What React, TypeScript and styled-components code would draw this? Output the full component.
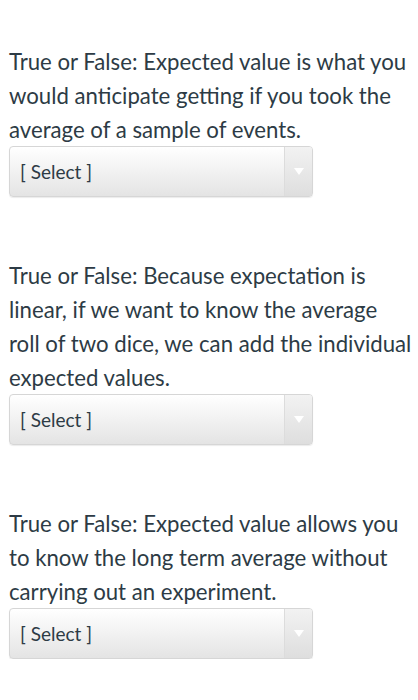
import React from "react";
import styled, { createGlobalStyle } from "styled-components";

const Global = createGlobalStyle`
  html, body { margin: 0; padding: 0; background: #ffffff; }
  body { font-family: Lato, "Open Sans", sans-serif; }
`;

const Page = styled.div`
  display: flex;
  flex-direction: column;
  gap: 62px;
  padding: 45px 0 0 9px;
`;

const Question = styled.div`
  display: flex;
  flex-direction: column;
`;

const Prompt = styled.p`
  margin: 0;
  width: 403px;
  font-size: 22.2px;
  line-height: 34px;
  color: #2d3b45;
`;

const SelectBox = styled.div`
  margin-top: -1px;
  width: 304px;
  height: 51px;
  box-sizing: border-box;
  display: flex;
  border: 1px solid #d6d6d6;
  border-radius: 4px;
  background: linear-gradient(#ffffff, #e4e4e4);
  box-shadow: 0 1px 1px rgba(0, 0, 0, 0.08);
  overflow: hidden;
`;

const SelectLabel = styled.span`
  flex: 1;
  display: flex;
  align-items: center;
  padding-left: 10px;
  font-size: 19px;
  color: #2d3b45;
`;

const ArrowPart = styled.span`
  width: 27px;
  display: flex;
  align-items: center;
  justify-content: center;
  border-left: 1px solid #dcdcdc;
  background: linear-gradient(#f2f2f2, #dedede);
`;

const Arrow = () => (
  <svg width="10" height="8" viewBox="0 0 10 8">
    <path d="M0 0 L10 0 L5 7 Z" fill="#ffffff" />
  </svg>
);

const questions = [
  "True or False: Expected value is what you would anticipate getting if you took the average of a sample of events.",
  "True or False: Because expectation is linear, if we want to know the average roll of two dice, we can add the individual expected values.",
  "True or False: Expected value allows you to know the long term average without carrying out an experiment.",
];

export default function App() {
  return (
    <>
      <Global />
      <Page>
        {questions.map((q) => (
          <Question key={q}>
            <Prompt>{q}</Prompt>
            <SelectBox>
              <SelectLabel>[ Select ]</SelectLabel>
              <ArrowPart>
                <Arrow />
              </ArrowPart>
            </SelectBox>
          </Question>
        ))}
      </Page>
    </>
  );
}
